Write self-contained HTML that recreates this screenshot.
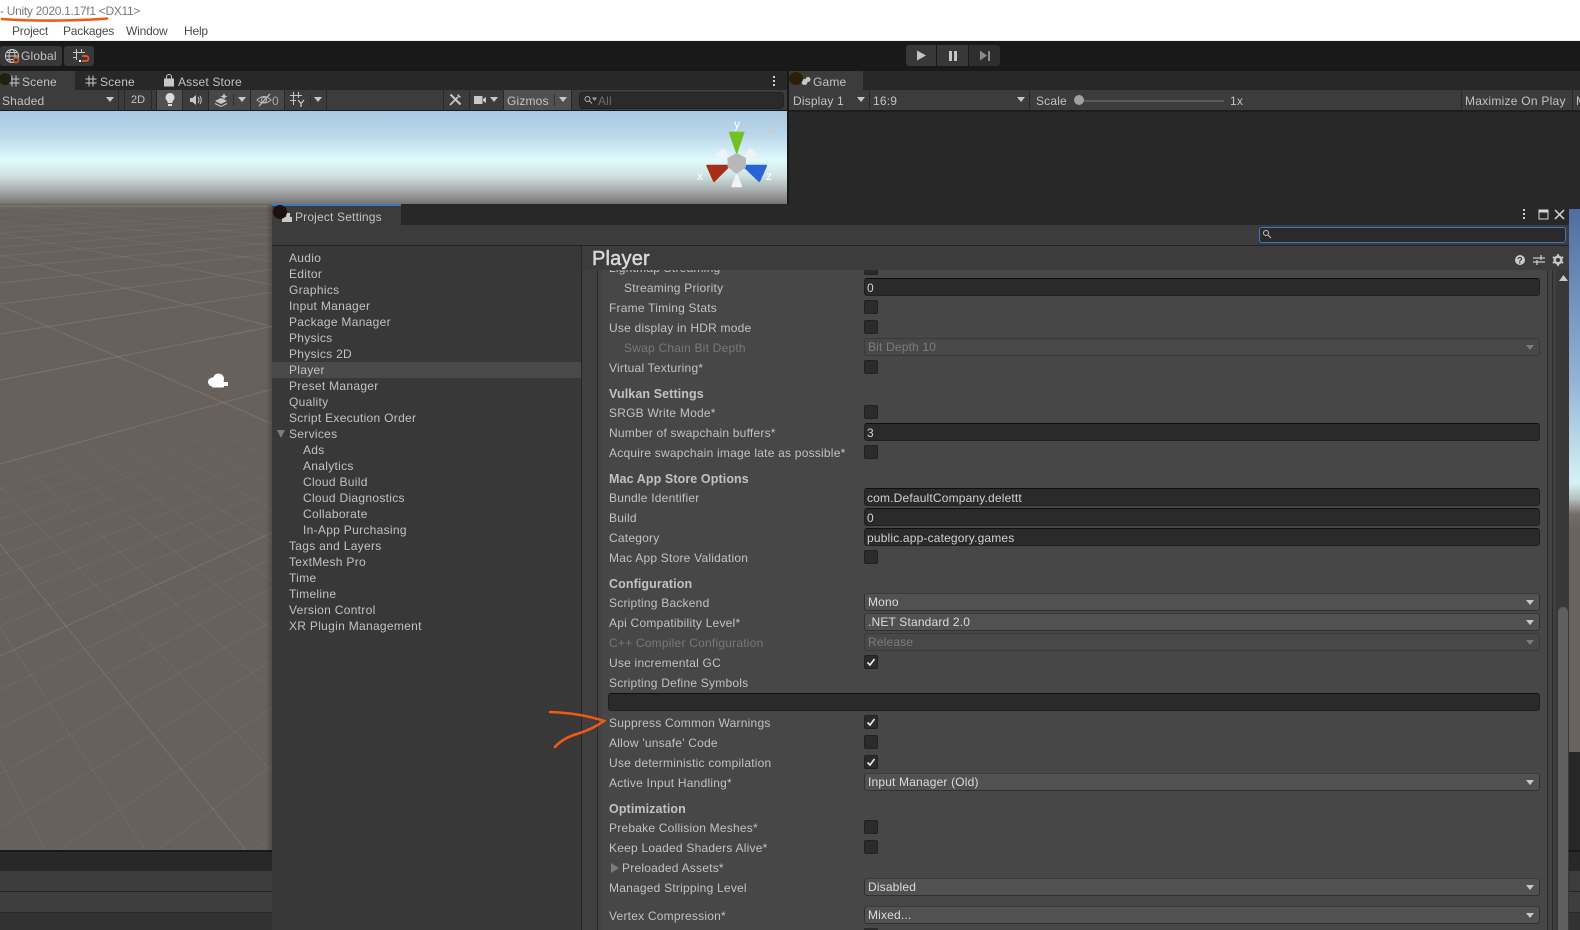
<!DOCTYPE html>
<html><head><meta charset="utf-8"><title>Unity</title>
<style>
html,body{margin:0;padding:0;background:#fff;overflow:hidden}
#a{position:relative;width:1580px;height:930px;overflow:hidden;background:#282828;font-family:"Liberation Sans",sans-serif;font-size:12px;letter-spacing:.17px;color:#c2c2c2}
#a div,#a svg{position:absolute}
.t{white-space:nowrap;line-height:16px;height:16px}
.l{left:609px;letter-spacing:.22px}
.i{left:624px;letter-spacing:.22px}
.d{color:#787878}
#a .b{font-weight:bold;letter-spacing:.1px;font-size:12.5px}
.s{left:289px;letter-spacing:.3px}
.c{left:303px;letter-spacing:.3px}
.f{left:864px;width:674px;height:16px;background:#2a2a2a;border:1px solid #202020;border-top-color:#0f0f0f;border-radius:3px;color:#d2d2d2;line-height:18px;text-indent:2px;white-space:nowrap}
.dd{left:864px;width:674px;height:16px;background:#515151;border:1px solid #303030;border-top-color:#3a3a3a;border-radius:3px;color:#dcdcdc;line-height:17px;text-indent:3px;white-space:nowrap}
.dd:after{content:"";position:absolute;right:5px;top:6px;border-left:4px solid transparent;border-right:4px solid transparent;border-top:5px solid #c8c8c8}
.dis{background:#484848;border-color:#3a3a3a;color:#7c7c7c}
.dis:after{border-top-color:#7c7c7c}
.k{left:864px;width:12px;height:12px;background:#2b2b2b;border:1px solid #212121;border-radius:2px}
.v{width:1px;background:#282828;top:90px;height:20px}
.m{color:#4a4a4a;top:23px;letter-spacing:-.2px}
</style></head><body><div id="a">

<!-- title & menu -->
<div style="left:0;top:0;width:1580px;height:41px;background:#fff"></div>
<div style="left:0;top:40px;width:1580px;height:1px;background:#eee"></div>
<div class="t" style="left:0;top:3px;color:#7b7b7b;letter-spacing:-.3px">- Unity 2020.1.17f1 &lt;DX11&gt;</div>
<div class="t m" style="left:12px">Project</div>
<div class="t m" style="left:63px">Packages</div>
<div class="t m" style="left:126px">Window</div>
<div class="t m" style="left:184px">Help</div>
<svg style="left:0;top:14px" width="115" height="10"><path d="M2 5 Q30 7 60 6.500 T107 4.500" fill="none" stroke="#f15a12" stroke-width="2.600" stroke-linecap="round"/></svg>

<!-- top toolbar -->
<div style="left:0;top:41px;width:1580px;height:30px;background:#191919"></div>
<div style="left:0;top:46px;width:62px;height:20px;background:#383838;border-radius:3px"></div>
<div style="left:64px;top:46px;width:30px;height:20px;background:#383838;border-radius:3px"></div>
<svg style="left:4px;top:48px" width="16" height="16" fill="none" stroke="#c8c8c8"><circle cx="8" cy="8" r="6.500"/><ellipse cx="8" cy="8" rx="3" ry="6.500"/><path d="M1.500 8H14.500M2.500 4.500H13.500M2.500 11.500H13.500"/><circle cx="12" cy="12" r="2.500" stroke="#ef5a2a" stroke-width="1.400" fill="#383838"/></svg>
<div class="t" style="left:21px;top:48px">Global</div>
<svg style="left:71px;top:47px" width="18" height="18" fill="none" stroke="#c8c8c8"><path d="M5.500 2V13M10.500 2V6M2 5.500H14M2 10.500H6"/><path d="M11 9H15A2.200 2.200 0 0 1 15 14H11" stroke="#ef5a2a" stroke-width="1.800"/><rect x="8" y="13" width="2" height="2" fill="#fff" stroke="none"/></svg>
<div style="left:906px;top:45px;width:30px;height:21px;background:#383838;border-radius:3px 0 0 3px"></div>
<div style="left:937px;top:45px;width:31px;height:21px;background:#383838"></div>
<div style="left:969px;top:45px;width:31px;height:21px;background:#2e2e2e;border-radius:0 3px 3px 0"></div>
<svg style="left:906px;top:45px" width="94" height="21" fill="#c4c4c4"><path d="M11 5.500V15.500L20 10.500Z"/><rect x="43" y="6" width="3" height="10"/><rect x="48" y="6" width="3" height="10"/><path d="M74 5.500V15.500L81 10.500Z" fill="#8a8a8a"/><rect x="82" y="6" width="2" height="10" fill="#8a8a8a"/></svg>

<!-- tabs -->
<div style="left:0;top:71px;width:787px;height:19px;background:#282828"></div>
<div style="left:0;top:71px;width:75px;height:19px;background:#3c3c3c"></div>
<svg style="left:8px;top:75px" width="12" height="12" stroke="#c8c8c8" fill="none"><path d="M4 .5V11.500M8 .5V11.500M.5 4H11.500M.5 8H11.500"/></svg>
<div style="left:-1px;top:73px;width:12px;height:12px;border-radius:50%;background:#1f2010"></div>
<div class="t" style="left:22px;top:74px">Scene</div>
<svg style="left:85px;top:75px" width="12" height="12" stroke="#c8c8c8" fill="none"><path d="M4 .5V11.500M8 .5V11.500M.5 4H11.500M.5 8H11.500"/></svg>
<div class="t" style="left:100px;top:74px">Scene</div>
<svg style="left:163px;top:74px" width="12" height="13"><path d="M1 4.500H11V12.500H1Z" fill="#c8c8c8"/><path d="M3.500 4.500V3A2.500 2.500 0 0 1 8.500 3V4.500" fill="none" stroke="#c8c8c8"/></svg>
<div class="t" style="left:178px;top:74px">Asset Store</div>
<svg style="left:772px;top:75px" width="4" height="12" fill="#d0d0d0"><rect x="1" y="1" width="2" height="2"/><rect x="1" y="5" width="2" height="2"/><rect x="1" y="9" width="2" height="2"/></svg>

<div style="left:787px;top:71px;width:2px;height:133px;background:#191919"></div>
<div style="left:789px;top:71px;width:791px;height:19px;background:#282828"></div>
<div style="left:789px;top:71px;width:74px;height:19px;background:#3c3c3c"></div>
<svg style="left:801px;top:76px" width="10" height="10" fill="#c8c8c8"><circle cx="3.500" cy="6" r="3"/><circle cx="7" cy="3.500" r="2.500"/></svg>
<div style="left:789px;top:72px;width:14px;height:13px;border-radius:50%;background:#2c1f08"></div>
<div class="t" style="left:813px;top:74px">Game</div>

<!-- scene toolbar -->
<div style="left:0;top:90px;width:787px;height:20px;background:#3c3c3c"></div>
<div style="left:0;top:110px;width:787px;height:1px;background:#191919"></div>
<div class="t" style="left:2px;top:93px">Shaded</div>
<svg style="left:106px;top:97px" width="8" height="6" fill="#c8c8c8"><path d="M0 0H8L4 5Z"/></svg>
<div class="v" style="left:118px"></div><div class="v" style="left:124px"></div>
<div class="t" style="left:131px;top:92px;font-size:11px;letter-spacing:0">2D</div>
<div class="v" style="left:151px"></div>
<div style="left:157px;top:90px;width:25px;height:20px;background:#505050"></div>
<div class="v" style="left:156px"></div><div class="v" style="left:182px"></div><div class="v" style="left:208px"></div>
<div style="left:209px;top:90px;width:41px;height:20px;background:#474747"></div>
<div style="left:251px;top:90px;width:33px;height:20px;background:#474747"></div>
<div class="v" style="left:250px"></div><div class="v" style="left:284px"></div><div class="v" style="left:326px"></div>
<svg style="left:163px;top:92px" width="14" height="16" fill="#dcdcdc"><path d="M7 1A4.500 4.500 0 0 1 9.500 9.200V11H4.500V9.200A4.500 4.500 0 0 1 7 1Z"/><rect x="5" y="12" width="4" height="2"/></svg>
<svg style="left:189px;top:94px" width="14" height="12" fill="#c8c8c8"><path d="M1 4H3.500L7 1V11L3.500 8H1Z"/><path d="M9 3Q11 6 9 9M11 2Q13.500 6 11 10" fill="none" stroke="#c8c8c8"/></svg>
<svg style="left:213px;top:92px" width="16" height="16" fill="#c8c8c8"><path d="M2 9L8 6L14 9L8 12Z"/><path d="M2 11.500L8 14.500L14 11.500" fill="none" stroke="#c8c8c8"/><path d="M11 1L12 3.500L14.500 4.500L12 5.500L11 8L10 5.500L7.500 4.500L10 3.500Z"/></svg>
<div style="left:233px;top:94px;width:1px;height:12px;background:#2e2e2e"></div>
<svg style="left:238px;top:97px" width="8" height="6" fill="#c8c8c8"><path d="M0 0H8L4 5Z"/></svg>
<svg style="left:256px;top:92px" width="18" height="16" fill="none" stroke="#b8b8b8"><path d="M1 8Q8 1 15 8Q8 14 1 8Z"/><circle cx="8" cy="8" r="2.500"/><path d="M3 14L14 2" stroke-width="1.300"/></svg>
<div class="t" style="left:272px;top:93px;color:#a8a8a8">0</div>
<svg style="left:289px;top:91px" width="17" height="17" fill="none" stroke="#c8c8c8"><path d="M4.500 1V14M9.500 1V7M1 4.500H13M1 9.500H7"/><path d="M9 9L12 12.500L15 9M12 12.500V16" stroke-width="1.300"/></svg>
<div style="left:310px;top:94px;width:1px;height:12px;background:#2e2e2e"></div>
<svg style="left:314px;top:97px" width="8" height="6" fill="#c8c8c8"><path d="M0 0H8L4 5Z"/></svg>
<div class="v" style="left:443px"></div><div class="v" style="left:469px"></div><div class="v" style="left:503px"></div>
<svg style="left:448px;top:92px" width="15" height="15" fill="none" stroke="#c8c8c8" stroke-width="1.600"><path d="M2 13L10 5M10 2.500A3 3 0 0 0 12.500 5"/><path d="M2.500 2.500L12.500 12.500" stroke-width="2"/></svg>
<svg style="left:473px;top:94px" width="14" height="12" fill="#c8c8c8"><rect x="1" y="2" width="8.500" height="8"/><path d="M10 5L13 3V9L10 7Z"/></svg>
<svg style="left:490px;top:97px" width="8" height="6" fill="#c8c8c8"><path d="M0 0H8L4 5Z"/></svg>
<div style="left:504px;top:90px;width:67px;height:20px;background:#505050"></div>
<div class="v" style="left:571px"></div>
<div class="t" style="left:507px;top:93px">Gizmos</div>
<div style="left:554px;top:94px;width:1px;height:12px;background:#333"></div>
<svg style="left:559px;top:97px" width="8" height="6" fill="#c8c8c8"><path d="M0 0H8L4 5Z"/></svg>
<div style="left:579px;top:92px;width:203px;height:15px;background:#2a2a2a;border:1px solid #212121;border-radius:4px"></div>
<svg style="left:583px;top:94px" width="14" height="12" fill="none" stroke="#b0b0b0"><circle cx="4.500" cy="5" r="2.500"/><path d="M6.500 7L9 9.500M10 4H13L11.500 6Z"/></svg>
<div class="t" style="left:598px;top:93px;color:#6c6c6c">All</div>

<!-- game toolbar -->
<div style="left:789px;top:90px;width:791px;height:20px;background:#3c3c3c"></div>
<div style="left:789px;top:110px;width:791px;height:2px;background:#1e1e1e"></div>
<div class="t" style="left:793px;top:93px">Display 1</div>
<svg style="left:857px;top:97px" width="8" height="6" fill="#c8c8c8"><path d="M0 0H8L4 5Z"/></svg>
<div class="v" style="left:869px"></div>
<div class="t" style="left:873px;top:93px">16:9</div>
<svg style="left:1017px;top:97px" width="8" height="6" fill="#c8c8c8"><path d="M0 0H8L4 5Z"/></svg>
<div class="v" style="left:1029px"></div>
<div class="t" style="left:1036px;top:93px">Scale</div>
<div style="left:1082px;top:100px;width:142px;height:2px;background:#5c5c5c"></div>
<div style="left:1074px;top:95px;width:10px;height:10px;border-radius:50%;background:#a0a0a0"></div>
<div class="t" style="left:1230px;top:93px">1x</div>
<div class="v" style="left:1461px"></div>
<div class="t" style="left:1465px;top:93px;letter-spacing:.25px">Maximize On Play</div>
<div class="v" style="left:1572px"></div>
<div class="t" style="left:1576px;top:93px;width:4px;overflow:hidden">M</div>

<!-- scene -->
<svg style="left:0;top:111px" width="787" height="740">
<defs>
<linearGradient id="sky" x1="0" y1="0" x2="0" y2="1"><stop offset="0" stop-color="#a8c8e3"/><stop offset=".27" stop-color="#bcd8ea"/><stop offset=".53" stop-color="#e0fbfc"/><stop offset=".7" stop-color="#cfe0e0"/><stop offset=".86" stop-color="#a5aaaa"/><stop offset="1" stop-color="#767472"/></linearGradient>
</defs>
<rect width="787" height="93" fill="url(#sky)"/>
<rect y="93" width="787" height="647" fill="#68615b"/>
<g transform="translate(0,-111)">
<path d="M729.300 132.300H744L736.700 153.700Z" fill="#74c020" stroke="#74c020" stroke-linejoin="round"/>
<path d="M707.300 165.700H729.300L714 181Z" fill="#a82d18" stroke="#a82d18" stroke-width="2" stroke-linejoin="round"/>
<path d="M743.300 165.700H766L759.300 181Z" fill="#2a62d8" stroke="#2a62d8" stroke-width="2" stroke-linejoin="round"/>
<path d="M717.300 155L723.300 150L728.300 158.300Z" fill="#f2f2f2" stroke="#f2f2f2" stroke-width="3" stroke-linejoin="round"/>
<path d="M756 155L750 150L745 158.300Z" fill="#f2f2f2" stroke="#f2f2f2" stroke-width="3" stroke-linejoin="round"/>
<path d="M736.700 173.300L731.700 186.700H741.700Z" fill="#f2f2f2" stroke="#f2f2f2" stroke-linejoin="round"/>
<path d="M736.700 153L746 158V167L736.700 174L727.500 167V158Z" fill="#b8b8ba"/>
<rect x="767.500" y="127" width="6" height="6" fill="#c4d0d4"/>
<text x="734" y="128" fill="#fff" font-size="12" font-family="Liberation Sans">y</text>
<text x="697" y="180" fill="#fff" font-size="12" font-family="Liberation Sans">x</text>
<text x="766" y="180" fill="#fff" font-size="12" font-family="Liberation Sans">z</text>
</g>
</svg>
<svg style="left:0;top:205px" width="272" height="645" viewBox="0 205 272 645">
<defs>
<linearGradient id="fade2" gradientUnits="userSpaceOnUse" x1="0" y1="385" x2="0" y2="530"><stop offset="0" stop-color="#000"/><stop offset="1" stop-color="#fff"/></linearGradient>
<mask id="mk2" maskUnits="userSpaceOnUse" x="0" y="205" width="272" height="645"><rect x="0" y="205" width="272" height="645" fill="url(#fade2)"/></mask>
<linearGradient id="hz" gradientUnits="userSpaceOnUse" x1="0" y1="205" x2="0" y2="320"><stop offset="0" stop-color="#68615b" stop-opacity=".8"/><stop offset="1" stop-color="#68615b" stop-opacity="0"/></linearGradient>
<linearGradient id="hz2" gradientUnits="userSpaceOnUse" x1="0" y1="204" x2="0" y2="209"><stop offset="0" stop-color="#7c7c7a"/><stop offset="1" stop-color="#7c7c7a" stop-opacity="0"/></linearGradient>
</defs>
<g stroke="#fff" stroke-opacity=".05" fill="none" mask="url(#mk2)">
<path d="M1077 168L0 1062M1077 168L0 967M1077 168L0 890M1077 168L0 827M1077 168L0 774M1077 168L0 729M1077 168L0 690M1077 168L0 626M1077 168L0 600M1077 168L0 576M1077 168L0 555M1077 168L0 536M1077 168L0 519M1077 168L0 503M1077 168L0 489M1077 168L0 476M1077 168L0 453M1077 168L0 442"/>
<path d="M-294 178L50 860M-294 178L152 860M-294 178L357 860M-294 178L459 860M-294 178L561 860M-294 178L664 860M-294 178L766 860M-294 178L868 860M-294 178L970 860M-294 178L1073 860M-294 178L1175 860"/>
</g>
<g stroke="#fff" stroke-opacity=".11" fill="none">
<path d="M1077 168L0 656M1077 168L0 464M1077 168L0 380M1077 168L0 334M1077 168L0 304M1077 168L0 283M1077 168L0 268M1077 168L0 256M1077 168L0 247M1077 168L0 239M1077 168L0 233M1077 168L0 228"/>
<path d="M-294 178L254 860M-294 178L1277 860M-294 178L2300 860M-294 178L3323 860M-294 178L4346 860M-294 178L5369 860M-294 178L6392 860M-294 178L7413 860"/>
</g>
<rect x="0" y="205" width="272" height="115" fill="url(#hz)"/>
<rect x="0" y="205" width="272" height="5" fill="url(#hz2)"/>
<g fill="#fff"><circle cx="212.500" cy="382" r="4.500"/><circle cx="218.500" cy="379" r="5.500"/><rect x="212" y="381" width="12" height="6.500" rx="1"/><rect x="224" y="382" width="4" height="4"/></g>
</svg>
<div style="left:266px;top:205px;width:6px;height:645px;background:linear-gradient(90deg,rgba(0,0,0,0),rgba(0,0,0,.22))"></div>

<!-- bottom left panels -->
<div style="left:0;top:850px;width:272px;height:2px;background:#191919"></div>
<div style="left:0;top:852px;width:272px;height:19px;background:#282828"></div>
<div style="left:0;top:871px;width:272px;height:20px;background:#3c3c3c"></div>
<div style="left:0;top:891px;width:272px;height:1px;background:#262626"></div>
<div style="left:0;top:892px;width:272px;height:20px;background:#3e3e3e"></div>
<div style="left:0;top:912px;width:272px;height:1px;background:#2a2a2a"></div>
<div style="left:0;top:913px;width:272px;height:17px;background:#323232"></div>

<!-- right strip -->
<div style="left:1569px;top:209px;width:11px;height:641px;background:linear-gradient(180deg,#4f6d9f 0,#6e8eb8 80px,#93b2d4 170px,#d6f2f5 274px,#b5bfbf 290px,#756e68 305px,#6a625c 320px,#6a625c 543px,#272727 543px,#272727 641px)"></div>
<div style="left:1569px;top:850px;width:11px;height:2px;background:#191919"></div>
<div style="left:1569px;top:852px;width:11px;height:19px;background:#282828"></div>
<div style="left:1569px;top:871px;width:11px;height:20px;background:#3c3c3c"></div>
<div style="left:1569px;top:891px;width:11px;height:1px;background:#262626"></div>
<div style="left:1569px;top:892px;width:11px;height:20px;background:#3e3e3e"></div>
<div style="left:1569px;top:912px;width:11px;height:1px;background:#2a2a2a"></div>
<div style="left:1569px;top:913px;width:11px;height:17px;background:#323232"></div>

<!-- window -->
<div style="left:272px;top:204px;width:1297px;height:726px;background:#383838"></div>
<div style="left:272px;top:204px;width:1297px;height:21px;background:#282828"></div>
<div style="left:272px;top:206px;width:129px;height:19px;background:#3c3c3c"></div>
<div style="left:272px;top:204px;width:129px;height:2px;background:#3a79bb"></div>
<svg style="left:281px;top:212px" width="11" height="11" fill="#c8c8c8"><path d="M1 5H5V1H9V5H11V10H1Z"/></svg>
<div style="left:273px;top:205px;width:14px;height:14px;border-radius:50%;background:#1d1011"></div>
<div class="t" style="left:295px;top:209px">Project Settings</div>
<svg style="left:1522px;top:208px" width="4" height="12" fill="#d0d0d0"><rect x="1" y="1" width="2" height="2"/><rect x="1" y="5" width="2" height="2"/><rect x="1" y="9" width="2" height="2"/></svg>
<svg style="left:1538px;top:209px" width="11" height="11" fill="none" stroke="#d8d8d8"><rect x="1" y="1" width="9" height="9"/><path d="M1 2.500H10" stroke-width="2"/></svg>
<svg style="left:1554px;top:209px" width="11" height="11" fill="none" stroke="#d8d8d8" stroke-width="1.500"><path d="M1 1L10 10M10 1L1 10"/></svg>

<div style="left:272px;top:225px;width:1297px;height:20px;background:#3c3c3c"></div>
<div style="left:272px;top:245px;width:1297px;height:1px;background:#232323"></div>
<div style="left:1259px;top:227px;width:305px;height:14px;background:#2a2a2a;border:1px solid #3a79bb;border-radius:3px"></div>
<svg style="left:1262px;top:229px" width="11" height="11" fill="none" stroke="#c0c0c0"><circle cx="4" cy="4" r="2.500"/><path d="M6 6L9 9"/></svg>

<div style="left:581px;top:246px;width:1px;height:684px;background:#262626"></div>
<div style="left:272px;top:362px;width:309px;height:16px;background:#4a4a4a"></div>

<div class="t s" style="top:250px">Audio</div>
<div class="t s" style="top:266px">Editor</div>
<div class="t s" style="top:282px">Graphics</div>
<div class="t s" style="top:298px">Input Manager</div>
<div class="t s" style="top:314px">Package Manager</div>
<div class="t s" style="top:330px">Physics</div>
<div class="t s" style="top:346px">Physics 2D</div>
<div class="t s" style="top:362px">Player</div>
<div class="t s" style="top:378px">Preset Manager</div>
<div class="t s" style="top:394px">Quality</div>
<div class="t s" style="top:410px">Script Execution Order</div>
<div class="t s" style="top:426px">Services</div>
<svg style="left:276px;top:430px" width="10" height="8" fill="#7c7c7c"><path d="M1 0H9L5 8Z"/></svg>
<div class="t c" style="top:442px">Ads</div>
<div class="t c" style="top:458px">Analytics</div>
<div class="t c" style="top:474px">Cloud Build</div>
<div class="t c" style="top:490px">Cloud Diagnostics</div>
<div class="t c" style="top:506px">Collaborate</div>
<div class="t c" style="top:522px">In-App Purchasing</div>
<div class="t s" style="top:538px">Tags and Layers</div>
<div class="t s" style="top:554px">TextMesh Pro</div>
<div class="t s" style="top:570px">Time</div>
<div class="t s" style="top:586px">Timeline</div>
<div class="t s" style="top:602px">Version Control</div>
<div class="t s" style="top:618px">XR Plugin Management</div>

<!-- player header -->
<div style="left:582px;top:246px;width:987px;height:24px;background:#3c3c3c"></div>
<div class="t" style="left:592px;top:247px;height:24px;line-height:24px;font-size:20px;letter-spacing:.2px;color:#d8d8d8;-webkit-text-stroke:.5px #d8d8d8">Player</div>
<svg style="left:1514px;top:254px" width="12" height="12"><circle cx="6" cy="6" r="5" fill="#c8c8c8"/><text x="6" y="9.500" text-anchor="middle" font-size="9" font-weight="bold" fill="#3c3c3c" font-family="Liberation Sans">?</text></svg>
<svg style="left:1533px;top:254px" width="12" height="12" fill="none" stroke="#c8c8c8" stroke-width="1.300"><path d="M0 4H12M0 8H12M8 1V6M4 6V11"/></svg>
<svg style="left:1552px;top:254px" width="12" height="12"><circle cx="6" cy="6" r="3.500" fill="none" stroke="#c8c8c8" stroke-width="2.200"/><path d="M6 0V12M.8 3L11.200 9M.8 9L11.200 3" stroke="#c8c8c8" stroke-width="1.800"/><circle cx="6" cy="6" r="2" fill="#3c3c3c"/></svg>

<!-- content -->
<div style="left:582px;top:270px;width:15px;height:660px;background:#3f3f3f"></div>
<div style="left:597px;top:270px;width:1px;height:660px;background:#2a2a2a"></div>
<div style="left:598px;top:270px;width:4px;height:660px;background:#424242"></div>
<div style="left:602px;top:270px;width:945px;height:660px;background:#474747"></div>
<div style="left:1547px;top:270px;width:1px;height:660px;background:#2a2a2a"></div>
<div style="left:1548px;top:270px;width:4px;height:660px;background:#424242"></div>
<div style="left:1552px;top:270px;width:1px;height:660px;background:#2a2a2a"></div>
<div style="left:1553px;top:270px;width:3px;height:660px;background:#3f3f3f"></div>
<div style="left:1556px;top:270px;width:13px;height:660px;background:#383838"></div>
<div style="left:1558px;top:607px;width:10px;height:323px;background:#5f5f5f;border-radius:5px 5px 0 0"></div>
<svg style="left:1559px;top:275px" width="9" height="7" fill="#c8c8c8"><path d="M0 6H9L4.500 0Z"/></svg>

<div style="left:0;top:0;width:1580px;height:930px;overflow:hidden;clip-path:inset(270px 0 0 582px)">
<div class="t l" style="top:260px">Lightmap Streaming</div><div class="k" style="top:261px"></div>
<div class="t i" style="top:280px">Streaming Priority</div><div class="f" style="top:278px">0</div>
<div class="t l" style="top:300px">Frame Timing Stats</div><div class="k" style="top:300px"></div>
<div class="t l" style="top:320px">Use display in HDR mode</div><div class="k" style="top:320px"></div>
<div class="t i d" style="top:340px">Swap Chain Bit Depth</div><div class="dd dis" style="top:338px">Bit Depth 10</div>
<div class="t l" style="top:360px">Virtual Texturing*</div><div class="k" style="top:360px"></div>
<div class="t l b" style="top:386px">Vulkan Settings</div>
<div class="t l" style="top:405px">SRGB Write Mode*</div><div class="k" style="top:405px"></div>
<div class="t l" style="top:425px">Number of swapchain buffers*</div><div class="f" style="top:423px">3</div>
<div class="t l" style="top:445px">Acquire swapchain image late as possible*</div><div class="k" style="top:445px"></div>
<div class="t l b" style="top:471px">Mac App Store Options</div>
<div class="t l" style="top:490px">Bundle Identifier</div><div class="f" style="top:488px">com.DefaultCompany.delettt</div>
<div class="t l" style="top:510px">Build</div><div class="f" style="top:508px">0</div>
<div class="t l" style="top:530px">Category</div><div class="f" style="top:528px">public.app-category.games</div>
<div class="t l" style="top:550px">Mac App Store Validation</div><div class="k" style="top:550px"></div>
<div class="t l b" style="top:576px">Configuration</div>
<div class="t l" style="top:595px">Scripting Backend</div><div class="dd" style="top:593px">Mono</div>
<div class="t l" style="top:615px">Api Compatibility Level*</div><div class="dd" style="top:613px">.NET Standard 2.0</div>
<div class="t l d" style="top:635px">C++ Compiler Configuration</div><div class="dd dis" style="top:633px">Release</div>
<div class="t l" style="top:655px">Use incremental GC</div><div class="k" style="top:655px"></div>
<div class="t l" style="top:675px">Scripting Define Symbols</div>
<div class="f" style="top:693px;left:608px;width:930px"></div>
<div class="t l" style="top:715px">Suppress Common Warnings</div><div class="k" style="top:715px"></div>
<div class="t l" style="top:735px">Allow 'unsafe' Code</div><div class="k" style="top:735px"></div>
<div class="t l" style="top:755px">Use deterministic compilation</div><div class="k" style="top:755px"></div>
<div class="t l" style="top:775px">Active Input Handling*</div><div class="dd" style="top:773px">Input Manager (Old)</div>
<div class="t l b" style="top:801px">Optimization</div>
<div class="t l" style="top:820px">Prebake Collision Meshes*</div><div class="k" style="top:820px"></div>
<div class="t l" style="top:840px">Keep Loaded Shaders Alive*</div><div class="k" style="top:840px"></div>
<svg style="left:611px;top:863px" width="8" height="10" fill="#7c7c7c"><path d="M0 0L8 5L0 10Z"/></svg>
<div class="t" style="left:622px;top:860px;letter-spacing:.22px">Preloaded Assets*</div>
<div class="t l" style="top:880px">Managed Stripping Level</div><div class="dd" style="top:878px">Disabled</div>
<div class="t l" style="top:908px">Vertex Compression*</div><div class="dd" style="top:906px">Mixed...</div>
<div style="left:864px;top:928px;width:14px;height:2px;background:#2b2b2b"></div>
<svg style="left:864px;top:655px" width="14" height="14" fill="none" stroke="#eee" stroke-width="1.600"><path d="M3.500 7.500L6 10L10.500 4"/></svg>
<svg style="left:864px;top:715px" width="14" height="14" fill="none" stroke="#eee" stroke-width="1.600"><path d="M3.500 7.500L6 10L10.500 4"/></svg>
<svg style="left:864px;top:755px" width="14" height="14" fill="none" stroke="#eee" stroke-width="1.600"><path d="M3.500 7.500L6 10L10.500 4"/></svg>
</div>

<!-- annotation arrow -->
<svg style="left:545px;top:705px" width="70" height="50" fill="none" stroke="#f15a12" stroke-width="2.600" stroke-linecap="round"><path d="M5 7Q35 8 59 16Q48 24 32 29Q18 33 10 42"/></svg>

</div></body></html>
